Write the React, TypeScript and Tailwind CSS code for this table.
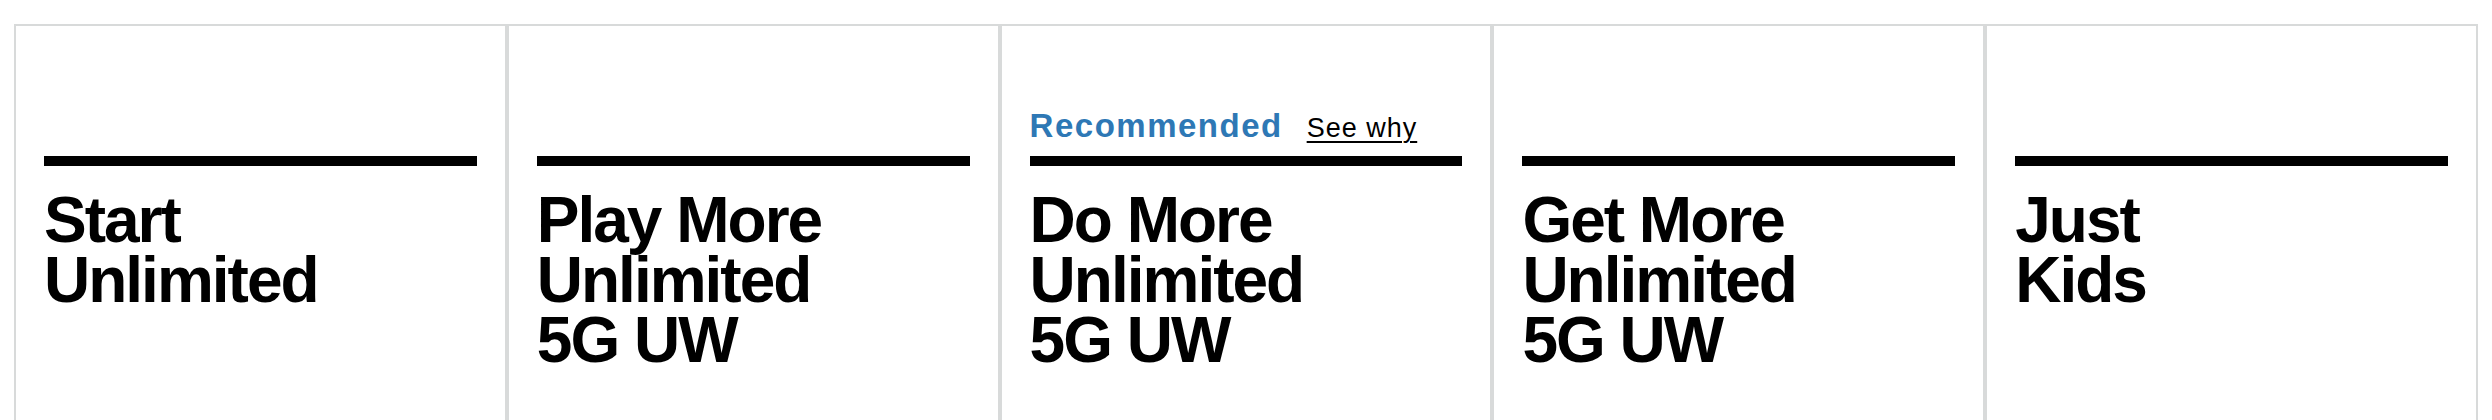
const plans: { lines: string[]; recommended?: boolean }[] = [
  { lines: ['Start', 'Unlimited'] },
  { lines: ['Play More', 'Unlimited', '5G UW'] },
  { lines: ['Do More', 'Unlimited', '5G UW'], recommended: true },
  { lines: ['Get More', 'Unlimited', '5G UW'] },
  { lines: ['Just', 'Kids'] },
]

function PlanCard({ lines, recommended }: { lines: string[]; recommended?: boolean }) {
  return (
    <div className="flex h-[460px] flex-col border-2 border-[#d8dada] px-[28px]">
      <div className="flex h-[130px] items-end pb-[10px]">
        {recommended && (
          <div className="flex items-baseline">
            <span className="text-[33px] leading-[36px] font-bold tracking-[1.5px] text-[#2e78b5]">
              Recommended
            </span>
            <a href="#" className="ml-[24px] text-[27px] leading-[36px] tracking-[1px] text-black underline decoration-2 underline-offset-[4px]">
              See why
            </a>
          </div>
        )}
      </div>
      <div className="h-[10px] bg-black" />
      <h2 className="mt-[24px] text-[64px] leading-[60px] font-bold tracking-[-2px] text-black">
        {lines.map((line) => (
          <span key={line} className="block">
            {line}
          </span>
        ))}
      </h2>
    </div>
  )
}

export default function App() {
  return (
    <div className="h-[420px] overflow-hidden bg-white px-[14px] pt-[24px] font-['Liberation_Sans',Arial,sans-serif]">
      <div className="grid grid-cols-5">
        {plans.map((plan) => (
          <PlanCard key={plan.lines.join(' ')} {...plan} />
        ))}
      </div>
    </div>
  )
}
